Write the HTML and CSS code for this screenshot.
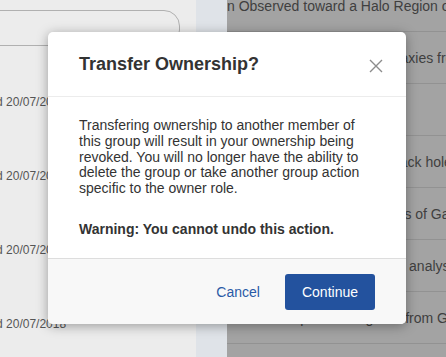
FILE: index.html
```html
<!DOCTYPE html>
<html lang="en">
<head>
    <meta charset="UTF-8">
    <meta name="viewport" content="width=device-width, initial-scale=1.0">
    <title>Transfer Ownership</title>
    <link rel="stylesheet" href="styles.css">
</head>
<body>
    <div class="page">
        <aside class="sidebar">
            <div class="search-box"></div>
            <ul class="dates">
                <li><span>Added 20/07/2018</span></li>
                <li><span>Added 20/07/2018</span></li>
                <li><span>Added 20/07/2018</span></li>
                <li><span>Added 20/07/2018</span></li>
            </ul>
        </aside>
        <div class="gutter"></div>
        <ul class="papers">
            <li>n Observed toward a Halo Region of the Milky Way</li>
            <li>Star Formation in Dwarf Galaxies from Deep Surveys</li>
            <li>Short Notes</li>
            <li>Rapid Growth of Massive Black holes</li>
            <li>Dark Matter Halos: Properties of Galaxies</li>
            <li>Robust Photometric Redshift analysis</li>
            <li>Late-time Optical Afterglows from GRBs</li>
            <li>Cosmic Rays</li>
        </ul>
    </div>

    <div class="modal">
        <div class="modal-header">
            <h3>Transfer Ownership?</h3>
            <button class="close" aria-label="Close">
                <svg width="14" height="14" viewBox="0 0 14 14">
                    <path d="M1 1 L13 13 M13 1 L1 13" stroke="#8c8c8c" stroke-width="1.4" fill="none"/>
                </svg>
            </button>
        </div>
        <div class="modal-body">
            <p>Transfering ownership to another member of this group will result in your ownership being revoked. You will no longer have the ability to delete the group or take another group action specific to the owner role.</p>
            <p class="warning">Warning: You cannot undo this action.</p>
        </div>
        <div class="modal-footer">
            <button class="link-button">Cancel</button>
            <button class="button">Continue</button>
        </div>
    </div>
</body>
</html>
```

FILE: styles.css
```css
html, body {
    margin: 0;
    padding: 0;
    height: 100%;
    overflow: hidden;
}

body {
    font-family: "Liberation Sans", Arial, sans-serif;
    color: #333333;
}

.page {
    display: flex;
    height: 357px;
}

.sidebar {
    width: 196px;
    flex-shrink: 0;
    background-color: #ececec;
    padding-top: 10px;
    overflow: hidden;
    box-sizing: border-box;
}

.search-box {
    height: 34px;
    width: 194px;
    margin-left: -16px;
    border: 1px solid #b0b0b0;
    border-radius: 16px;
}

.dates {
    list-style: none;
    margin: 19px 0 0 0;
    padding: 0;
}

.dates li {
    height: 74px;
    display: flex;
    align-items: center;
    font-size: 12px;
    color: #555555;
    white-space: nowrap;
}

.dates li span {
    margin-left: -32px;
}

.gutter {
    width: 31px;
    flex-shrink: 0;
    background-color: #dfe3e8;
}

.papers {
    flex: 1;
    list-style: none;
    margin: -20px 0 0 0;
    padding: 0;
    background-color: #a3a3a3;
    overflow: hidden;
}

.papers li {
    height: 51px;
    border-bottom: 1px solid #929292;
    display: flex;
    align-items: center;
    font-size: 14px;
    color: #3f3f3f;
    white-space: nowrap;
}

/* dialog */
.modal {
    position: absolute;
    left: 48px;
    top: 32px;
    width: 358px;
    background-color: #ffffff;
    border-radius: 5px;
    overflow: hidden;
    box-shadow: 0 2px 12px rgba(0, 0, 0, 0.35);
}

.modal-header {
    display: flex;
    justify-content: space-between;
    align-items: center;
    height: 64px;
    padding: 0 23px 0 31px;
    border-bottom: 1px solid #ececec;
}

.modal-header h3 {
    margin: 0;
    font-size: 18px;
    line-height: 22px;
    font-weight: bold;
    color: #333333;
}

.close {
    background: none;
    border: none;
    padding: 0;
    margin-top: 4px;
    width: 14px;
    height: 14px;
    display: flex;
    cursor: pointer;
}

.modal-body {
    padding: 21px 31px 20px 31px;
}

.modal-body p {
    margin: 0;
    font-size: 14px;
    line-height: 15.75px;
    color: #333333;
}

.modal-body .warning {
    margin-top: 25px;
    font-weight: bold;
}

.modal-footer {
    display: flex;
    justify-content: flex-end;
    align-items: center;
    gap: 25px;
    padding: 15px 31px 14px 31px;
    background-color: #f8f8f8;
    border-top: 1px solid #dddddd;
}

.link-button {
    background: none;
    border: none;
    padding: 0;
    font-family: inherit;
    font-size: 14px;
    color: #2a5aa6;
    cursor: pointer;
}

.button {
    height: 36px;
    padding: 0 17px;
    font-family: inherit;
    font-size: 14px;
    color: #ffffff;
    background-color: #23529e;
    border: none;
    border-radius: 3px;
    cursor: pointer;
}
```
